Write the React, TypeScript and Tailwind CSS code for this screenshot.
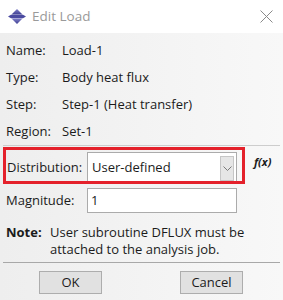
import React from "react";

const font = { fontFamily: '"Open Sans", "Noto Sans", sans-serif' };

function Row({ label, value }: { label: string; value: string }) {
  return (
    <div className="flex h-[27px] items-center pl-[6px]">
      <span className="w-[56px]">{label}</span>
      <span>{value}</span>
    </div>
  );
}

export default function App() {
  return (
    <div className="w-[283px] h-[300px] overflow-hidden text-[13px] text-[#1b1b1b]" style={font}>
      {/* title bar */}
      <div className="h-[33px] bg-white flex items-center relative">
        <svg className="ml-[8px]" width="18" height="15" viewBox="0 0 18 15">
          <defs>
            <linearGradient id="g" x1="0" y1="0" x2="0" y2="1">
              <stop offset="0" stopColor="#8080c8" />
              <stop offset="1" stopColor="#3e3e92" />
            </linearGradient>
          </defs>
          <polygon points="9,0 3.5,5.5 14.5,5.5" fill="url(#g)" />
          <polygon points="0,7.5 3,5.8 15,5.8 18,7.5 15,9.2 3,9.2" fill="#4a4aa0" />
          <polygon points="3.5,9.5 14.5,9.5 9,15" fill="url(#g)" />
        </svg>
        <span className="ml-[6px] text-[#9a9a9a] text-[13.5px]">Edit Load</span>
        <svg className="absolute left-[260px] top-[10px]" width="13" height="13" viewBox="0 0 13 13">
          <path d="M0.5 0.5 L12.5 12.5 M12.5 0.5 L0.5 12.5" stroke="#8a8a8a" strokeWidth="1" />
        </svg>
      </div>
      {/* body */}
      <div className="h-[267px] bg-linear-to-r from-[#eeeeee] to-[#f8f8f8] flex flex-col pt-[4px]">
        <Row label="Name:" value="Load-1" />
        <Row label="Type:" value="Body heat flux" />
        <Row label="Step:" value="Step-1 (Heat transfer)" />
        <Row label="Region:" value="Set-1" />
        <div className="h-px bg-[#cdcdcd] mx-[3px]" />
        <div className="flex mt-[1px]">
          <div className="ml-[3px] w-[242px] h-[37px] border-[3px] border-[#e4212b] flex overflow-hidden">
            <span className="w-[81px] pl-[1px] mt-[8px] leading-[18px]">Distribution:</span>
            <div className="mt-[2px] w-[150px] h-[30px] bg-white border border-[#ababab] flex items-center relative">
              <span className="ml-[4px] mt-[1px]">User-defined</span>
              <div className="absolute left-[132px] top-[3px] w-[14px] h-[25px] bg-[#e6e6e6] border border-[#c6c6c6] flex items-center justify-center">
                <svg width="9" height="5" viewBox="0 0 9 5">
                  <path d="M0.5 0.5 L4.5 4.5 L8.5 0.5" stroke="#7a7a7a" fill="none" strokeWidth="1" />
                </svg>
              </div>
            </div>
          </div>
          <span className="ml-[9px] mt-[8px] text-[11px] font-bold italic leading-[14px]">f(x)</span>
        </div>
        <div className="flex mt-[4px] pl-[6px]">
          <span className="w-[81px] leading-[25px]">Magnitude:</span>
          <div className="w-[150px] h-[25px] bg-white border border-[#ababab] flex items-center pl-[3px]">1</div>
        </div>
        <div className="flex mt-[11px] pl-[6px] leading-[17px]">
          <span className="w-[44px] font-bold">Note:</span>
          <span>
            User subroutine DFLUX must be
            <br />
            attached to the analysis job.
          </span>
        </div>
        <div className="h-px bg-[#a8a8a8] mx-[3px] mt-[4px]" />
        <div className="flex mt-[8px]">
          <div className="ml-[39px] w-[63px] h-[23px] bg-[#e1e1e1] border border-[#adadad] flex items-center justify-center">OK</div>
          <div className="ml-[78px] w-[63px] h-[23px] bg-[#e1e1e1] border border-[#adadad] flex items-center justify-center">Cancel</div>
        </div>
      </div>
    </div>
  );
}
